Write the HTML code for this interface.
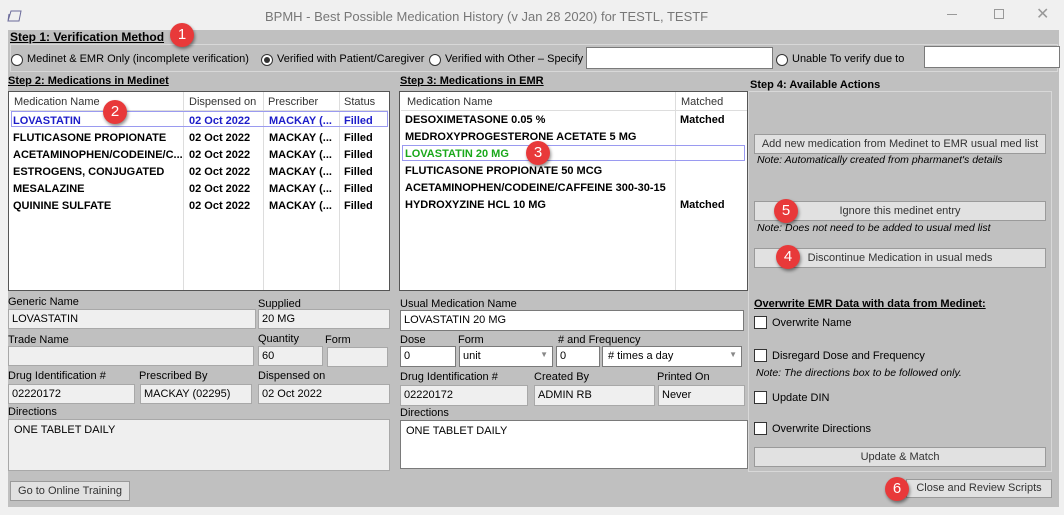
<!DOCTYPE html>
<html><head><meta charset="utf-8"><style>
*{box-sizing:border-box;margin:0;padding:0}
body{width:1064px;height:515px;background:#f0f0f0;font-family:"Liberation Sans",sans-serif;font-size:11px;color:#000;position:relative;overflow:hidden}
.a{position:absolute;white-space:nowrap}
.b{font-weight:bold}
.u{text-decoration:underline}
.in{position:absolute;background:#efefef;border:1px solid #a8a8a8;padding:3px 0 0 3px;font-size:11px}
.w{background:#fff;border-color:#7a7a7a}
.btn{position:absolute;background:#e1e1e1;border:1px solid #9a9a9a;text-align:center;color:#333;font-size:11px}
.badge{position:absolute;width:24px;height:24px;border-radius:50%;background:#e8393a;color:#fff;font-size:15px;text-align:center;line-height:24px;box-shadow:1px 2px 3px rgba(0,0,0,.45)}
.rad{position:absolute;width:12px;height:12px;border-radius:50%;background:#fff;border:1px solid #333}
.chk{position:absolute;width:13px;height:13px;background:#fff;border:1px solid #333}
.list{position:absolute;background:#fff;border:1px solid #555}
.it{font-style:italic}
</style></head><body>
<div class="a" style="left:0;top:0;width:1064px;height:30px;background:#f0f0f0"></div>
<svg class="a" style="left:7px;top:9px" width="16" height="14"><path d="M4 2h10l-2 10H1z M1 12l1-7" fill="none" stroke="#6a6a9a" stroke-width="1"/></svg>
<div class="a" style="left:265px;top:9px;font-size:13px;color:#777">BPMH - Best Possible Medication History (v Jan 28 2020) for TESTL, TESTF</div>
<div class="a" style="left:947px;top:14px;width:10px;height:1px;background:#999"></div>
<div class="a" style="left:994px;top:9px;width:10px;height:10px;border:1px solid #999"></div>
<div class="a" style="left:1036px;top:4px;font-size:16px;color:#999">✕</div>
<div class="a" style="left:8px;top:30px;width:1051px;height:477px;background:#c0c0c0"></div>
<div class="a" style="left:10px;top:44px;width:1048px;height:28px;border:1px solid #d8d8d8"></div>
<div class="a b u" style="left:10px;top:30px;font-size:12px">Step 1: Verification Method</div>
<div class="badge" style="left:170px;top:23px">1</div>
<div class="rad" style="left:11px;top:54px"></div><div class="a" style="left:27px;top:53px">Medinet &amp; EMR Only (incomplete verification)</div>
<div class="rad" style="left:261px;top:54px"></div><div class="a" style="left:264px;top:57px;width:6px;height:6px;border-radius:50%;background:#333"></div><div class="a" style="left:277px;top:53px">Verified with Patient/Caregiver</div>
<div class="rad" style="left:429px;top:54px"></div><div class="a" style="left:445px;top:53px">Verified with Other – Specify</div>
<div class="in w" style="left:586px;top:47px;width:187px;height:22px"></div>
<div class="rad" style="left:776px;top:54px"></div><div class="a" style="left:792px;top:53px">Unable To verify due to</div>
<div class="in w" style="left:924px;top:46px;width:136px;height:22px"></div>

<div class="a b u" style="left:8px;top:75px">Step 2: Medications in Medinet</div>
<div class="list" style="left:8px;top:91px;width:382px;height:200px">
<div class="a" style="left:174px;top:0;width:1px;height:198px;background:#ddd"></div>
<div class="a" style="left:254px;top:0;width:1px;height:198px;background:#ddd"></div>
<div class="a" style="left:330px;top:0;width:1px;height:198px;background:#ddd"></div>
<div class="a" style="left:1px;top:18px;width:378px;height:1px;background:#ddd"></div>
<div class="a" style="left:5px;top:4px;color:#333">Medication Name</div><div class="a" style="left:180px;top:4px;color:#333">Dispensed on</div><div class="a" style="left:259px;top:4px;color:#333">Prescriber</div><div class="a" style="left:335px;top:4px;color:#333">Status</div>
<div class="a" style="left:2px;top:19px;width:377px;height:16px;border:1px solid #9a9af0"></div>
<div class="a b" style="left:4px;top:21px;color:#1c1cc8;line-height:17px">LOVASTATIN</div><div class="a b" style="left:180px;top:21px;color:#1c1cc8;line-height:17px">02 Oct 2022</div><div class="a b" style="left:260px;top:21px;color:#1c1cc8;line-height:17px">MACKAY (...</div><div class="a b" style="left:335px;top:21px;color:#1c1cc8;line-height:17px">Filled</div>
<div class="a b" style="left:4px;top:38px;line-height:17px">FLUTICASONE PROPIONATE<br>ACETAMINOPHEN/CODEINE/C...<br>ESTROGENS, CONJUGATED<br>MESALAZINE<br>QUININE SULFATE</div>
<div class="a b" style="left:180px;top:38px;line-height:17px">02 Oct 2022<br>02 Oct 2022<br>02 Oct 2022<br>02 Oct 2022<br>02 Oct 2022</div>
<div class="a b" style="left:260px;top:38px;line-height:17px">MACKAY (...<br>MACKAY (...<br>MACKAY (...<br>MACKAY (...<br>MACKAY (...</div>
<div class="a b" style="left:335px;top:38px;line-height:17px">Filled<br>Filled<br>Filled<br>Filled<br>Filled</div>
</div>
<div class="badge" style="left:103px;top:100px">2</div>

<div class="a b u" style="left:400px;top:75px">Step 3: Medications in EMR</div>
<div class="list" style="left:399px;top:91px;width:349px;height:200px">
<div class="a" style="left:275px;top:0;width:1px;height:198px;background:#ddd"></div>
<div class="a" style="left:1px;top:18px;width:346px;height:1px;background:#ddd"></div>
<div class="a" style="left:7px;top:4px;color:#333">Medication Name</div><div class="a" style="left:281px;top:4px;color:#333">Matched</div>
<div class="a" style="left:2px;top:53px;width:343px;height:16px;border:1px solid #9a9af0"></div>
<div class="a b" style="left:5px;top:20px;line-height:17px">DESOXIMETASONE 0.05 %<br>MEDROXYPROGESTERONE ACETATE 5 MG<br><span style="color:#1aa81a">LOVASTATIN 20 MG</span><br>FLUTICASONE PROPIONATE 50 MCG<br>ACETAMINOPHEN/CODEINE/CAFFEINE 300-30-15<br>HYDROXYZINE HCL 10 MG</div>
<div class="a b" style="left:280px;top:20px;line-height:17px">Matched<br><br><br><br><br>Matched</div>
</div>
<div class="badge" style="left:526px;top:141px">3</div>

<div class="a b" style="left:750px;top:79px">Step 4: Available Actions</div>
<div class="a" style="left:748px;top:91px;width:304px;height:381px;border:1px solid #d8d8d8"></div>
<div class="btn" style="left:754px;top:134px;width:292px;height:20px;line-height:18px">Add new medication from Medinet to EMR usual med list</div>
<div class="a it" style="left:757px;top:154px;font-size:10.5px">Note: Automatically created from pharmanet's details</div>
<div class="btn" style="left:754px;top:201px;width:292px;height:20px;line-height:18px">Ignore this medinet entry</div>
<div class="badge" style="left:774px;top:199px">5</div>
<div class="a it" style="left:757px;top:222px;font-size:10.5px">Note: Does not need to be added to usual med list</div>
<div class="btn" style="left:754px;top:248px;width:292px;height:20px;line-height:18px">Discontinue Medication in usual meds</div>
<div class="badge" style="left:776px;top:245px">4</div>
<div class="a b u" style="left:754px;top:298px">Overwrite EMR Data with data from Medinet:</div>
<div class="chk" style="left:754px;top:316px"></div><div class="a" style="left:772px;top:317px">Overwrite Name</div>
<div class="chk" style="left:754px;top:349px"></div><div class="a" style="left:772px;top:350px">Disregard Dose and Frequency</div>
<div class="a it" style="left:756px;top:367px;font-size:10.5px">Note: The directions box to be followed only.</div>
<div class="chk" style="left:754px;top:391px"></div><div class="a" style="left:772px;top:392px">Update DIN</div>
<div class="chk" style="left:754px;top:422px"></div><div class="a" style="left:772px;top:423px">Overwrite Directions</div>
<div class="btn" style="left:754px;top:447px;width:292px;height:20px;line-height:18px">Update &amp; Match</div>
<div class="btn" style="left:906px;top:479px;width:146px;height:19px;line-height:17px">Close and Review Scripts</div>
<div class="badge" style="left:885px;top:477px">6</div>
<div class="btn" style="left:10px;top:481px;width:120px;height:20px;line-height:18px">Go to Online Training</div>

<div class="a" style="left:8px;top:296px">Generic Name</div>
<div class="in" style="left:8px;top:309px;width:248px;height:20px">LOVASTATIN</div>
<div class="a" style="left:258px;top:298px">Supplied</div>
<div class="in" style="left:258px;top:309px;width:132px;height:20px">20 MG</div>
<div class="a" style="left:8px;top:334px">Trade Name</div>
<div class="in" style="left:8px;top:346px;width:246px;height:20px"></div>
<div class="a" style="left:258px;top:333px">Quantity</div>
<div class="in" style="left:258px;top:346px;width:65px;height:20px">60</div>
<div class="a" style="left:325px;top:334px">Form</div>
<div class="in" style="left:327px;top:347px;width:61px;height:20px"></div>
<div class="a" style="left:8px;top:370px">Drug Identification #</div>
<div class="in" style="left:8px;top:384px;width:127px;height:20px">02220172</div>
<div class="a" style="left:139px;top:370px">Prescribed By</div>
<div class="in" style="left:140px;top:384px;width:112px;height:20px">MACKAY (02295)</div>
<div class="a" style="left:258px;top:370px">Dispensed on</div>
<div class="in" style="left:258px;top:384px;width:132px;height:20px">02 Oct 2022</div>
<div class="a" style="left:8px;top:406px">Directions</div>
<div class="in" style="left:8px;top:419px;width:382px;height:52px;padding:4px 0 0 5px">ONE TABLET DAILY</div>

<div class="a" style="left:400px;top:298px">Usual Medication Name</div>
<div class="in w" style="left:400px;top:310px;width:344px;height:21px">LOVASTATIN 20 MG</div>
<div class="a" style="left:400px;top:334px">Dose</div>
<div class="in w" style="left:400px;top:346px;width:56px;height:21px">0</div>
<div class="a" style="left:458px;top:334px">Form</div>
<div class="in w" style="left:459px;top:346px;width:94px;height:21px;padding-left:3px">unit<span class="a" style="right:4px;top:3px;color:#888;font-size:8px">▼</span></div>
<div class="a" style="left:558px;top:334px"># and Frequency</div>
<div class="in w" style="left:556px;top:346px;width:44px;height:21px">0</div>
<div class="in w" style="left:602px;top:346px;width:140px;height:21px;padding-left:5px"># times a day<span class="a" style="right:4px;top:3px;color:#888;font-size:8px">▼</span></div>
<div class="a" style="left:400px;top:371px">Drug Identification #</div>
<div class="in" style="left:400px;top:385px;width:128px;height:21px">02220172</div>
<div class="a" style="left:534px;top:371px">Created By</div>
<div class="in" style="left:534px;top:385px;width:121px;height:21px">ADMIN RB</div>
<div class="a" style="left:657px;top:371px">Printed On</div>
<div class="in" style="left:658px;top:385px;width:87px;height:21px">Never</div>
<div class="a" style="left:400px;top:407px">Directions</div>
<div class="in w" style="left:400px;top:420px;width:348px;height:49px;padding:4px 0 0 5px">ONE TABLET DAILY</div>
</body></html>
